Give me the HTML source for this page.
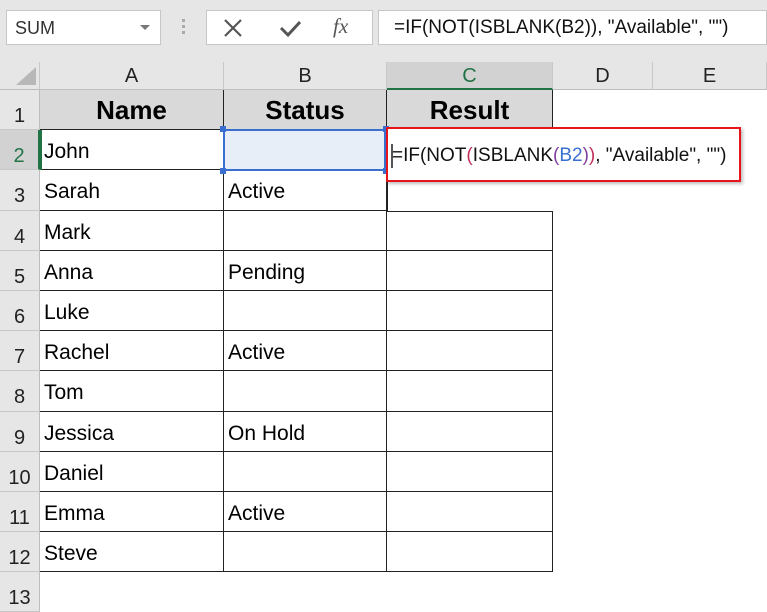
<!DOCTYPE html>
<html><head><style>
*{margin:0;padding:0;box-sizing:border-box}
body{width:767px;height:610px;overflow:hidden;background:#fff;font-family:"Liberation Sans",Arial,sans-serif;position:relative}
.a{position:absolute}
.tb{left:0;top:0;width:767px;height:62px;background:#e6e6e6}
.box{background:#fff;border:1px solid #c6c6c6}
.ch{top:62px;height:28px;background:#e6e6e6;border-right:1px solid #c8c8c8;border-bottom:1px solid #bdbdbd;text-align:center;font-size:20px;line-height:28px;color:#222}
.rh{left:0;width:40px;background:#e6e6e6;border-bottom:1px solid #c8c8c8;border-right:1px solid #bdbdbd;text-align:center;font-size:20px;color:#222;padding-top:15px}
.c{border-right:1.5px solid #222;border-bottom:1.5px solid #222;font-size:21px;color:#000;padding-left:4px;line-height:44px}
.h{background:#d9d9d9;font-weight:bold;font-size:26px;text-align:center;padding:0;line-height:41px}
</style></head><body>
<div class="a tb"></div>
<div class="a box" style="left:6px;top:10px;width:155px;height:35px;font-size:18px;line-height:34px;padding-left:8px;color:#333">SUM</div>
<div class="a" style="left:140px;top:25px;width:0;height:0;border-left:5px solid transparent;border-right:5px solid transparent;border-top:5px solid #777"></div>
<div class="a" style="left:182px;top:19px;width:3px;height:3px;background:#aaa;box-shadow:0 6px #aaa,0 12px #aaa"></div>
<div class="a box" style="left:206px;top:10px;width:167px;height:35px"></div>
<svg class="a" style="left:222px;top:17px" width="24" height="22"><path d="M3 3L19 19M19 3L3 19" stroke="#555" stroke-width="2.2"/></svg>
<svg class="a" style="left:278px;top:17px" width="26" height="22"><path d="M3 11L10 18L22 5" stroke="#555" stroke-width="3" fill="none"/></svg>
<div class="a" style="left:333px;top:14px;font-family:'Liberation Serif',serif;font-style:italic;font-size:21px;color:#555">fx</div>
<div class="a box" style="left:378px;top:10px;width:389px;height:35px;font-size:19px;line-height:34px;padding-left:15px;color:#111">=IF(NOT(ISBLANK(B2)), "Available", "")</div>
<div class="a" style="left:0;top:62px;width:40px;height:28px;background:#e6e6e6;border-right:1px solid #c8c8c8;border-bottom:1px solid #bdbdbd"></div>
<div class="a" style="left:16px;top:67px;width:0;height:0;border-left:20px solid transparent;border-bottom:18px solid #b8b8b8"></div>
<div class="a ch" style="left:40px;width:184px">A</div>
<div class="a ch" style="left:224px;width:163px">B</div>
<div class="a ch" style="left:387px;width:166px;background:#d2d2d2;color:#217346;border-bottom:2px solid #217346">C</div>
<div class="a ch" style="left:553px;width:100px">D</div>
<div class="a ch" style="left:653px;width:114px">E</div>
<div class="a rh" style="top:90px;height:40px">1</div>
<div class="a rh" style="top:130px;height:40px;background:#d2d2d2;color:#217346;border-right:2px solid #217346">2</div>
<div class="a rh" style="top:170px;height:41px">3</div>
<div class="a rh" style="top:211px;height:40px">4</div>
<div class="a rh" style="top:251px;height:40px">5</div>
<div class="a rh" style="top:291px;height:40px">6</div>
<div class="a rh" style="top:331px;height:40px">7</div>
<div class="a rh" style="top:371px;height:41px">8</div>
<div class="a rh" style="top:412px;height:40px">9</div>
<div class="a rh" style="top:452px;height:40px">10</div>
<div class="a rh" style="top:492px;height:40px">11</div>
<div class="a rh" style="top:532px;height:40px">12</div>
<div class="a rh" style="top:572px;height:40px">13</div>

<div class="a c h" style="left:40px;top:90px;width:184px;height:40px">Name</div>
<div class="a c h" style="left:224px;top:90px;width:163px;height:40px">Status</div>
<div class="a c h" style="left:387px;top:90px;width:166px;height:40px">Result</div>

<div class="a c" style="left:40px;top:130px;width:184px;height:40px">John</div>
<div class="a c" style="left:224px;top:130px;width:163px;height:40px"></div>
<div class="a c" style="left:40px;top:170px;width:184px;height:41px">Sarah</div>
<div class="a c" style="left:224px;top:170px;width:163px;height:41px">Active</div>
<div class="a c" style="left:40px;top:211px;width:184px;height:40px">Mark</div>
<div class="a c" style="left:224px;top:211px;width:163px;height:40px"></div>
<div class="a c" style="left:387px;top:211px;width:166px;height:40px;border-top:1.5px solid #222"></div>
<div class="a c" style="left:40px;top:251px;width:184px;height:40px">Anna</div>
<div class="a c" style="left:224px;top:251px;width:163px;height:40px">Pending</div>
<div class="a c" style="left:387px;top:251px;width:166px;height:40px"></div>
<div class="a c" style="left:40px;top:291px;width:184px;height:40px">Luke</div>
<div class="a c" style="left:224px;top:291px;width:163px;height:40px"></div>
<div class="a c" style="left:387px;top:291px;width:166px;height:40px"></div>
<div class="a c" style="left:40px;top:331px;width:184px;height:40px">Rachel</div>
<div class="a c" style="left:224px;top:331px;width:163px;height:40px">Active</div>
<div class="a c" style="left:387px;top:331px;width:166px;height:40px"></div>
<div class="a c" style="left:40px;top:371px;width:184px;height:41px">Tom</div>
<div class="a c" style="left:224px;top:371px;width:163px;height:41px"></div>
<div class="a c" style="left:387px;top:371px;width:166px;height:41px"></div>
<div class="a c" style="left:40px;top:412px;width:184px;height:40px">Jessica</div>
<div class="a c" style="left:224px;top:412px;width:163px;height:40px">On Hold</div>
<div class="a c" style="left:387px;top:412px;width:166px;height:40px"></div>
<div class="a c" style="left:40px;top:452px;width:184px;height:40px">Daniel</div>
<div class="a c" style="left:224px;top:452px;width:163px;height:40px"></div>
<div class="a c" style="left:387px;top:452px;width:166px;height:40px"></div>
<div class="a c" style="left:40px;top:492px;width:184px;height:40px">Emma</div>
<div class="a c" style="left:224px;top:492px;width:163px;height:40px">Active</div>
<div class="a c" style="left:387px;top:492px;width:166px;height:40px"></div>
<div class="a c" style="left:40px;top:532px;width:184px;height:40px">Steve</div>
<div class="a c" style="left:224px;top:532px;width:163px;height:40px"></div>
<div class="a c" style="left:387px;top:532px;width:166px;height:40px"></div>
<div class="a" style="left:40px;top:130px;width:2px;height:40px;background:#217346"></div>

<div class="a" style="left:223px;top:129px;width:163px;height:42px;background:#e8eef8;border:2px solid #3a6fcf"></div>
<div class="a" style="left:220px;top:126px;width:6px;height:6px;background:#3a6fcf"></div>
<div class="a" style="left:383px;top:126px;width:6px;height:6px;background:#3a6fcf"></div>
<div class="a" style="left:220px;top:168px;width:6px;height:6px;background:#3a6fcf"></div>
<div class="a" style="left:383px;top:168px;width:6px;height:6px;background:#3a6fcf"></div>

<div class="a" style="left:386px;top:127px;width:355px;height:55px;background:#fff;border:2px solid #e8141c;box-shadow:2px 2px 3px rgba(0,0,0,.25)"></div>
<div class="a" style="left:386px;top:182px;width:1.5px;height:30px;background:#222"></div>
<div class="a" style="left:391px;top:144px;width:2px;height:24px;background:#555"></div>
<div class="a" style="left:392px;top:145px;font-size:19px;color:#111;white-space:nowrap">=IF(NOT<span style="color:#c0305a">(</span>ISBLANK<span style="color:#8040a0">(</span><span style="color:#3a6fcf">B2</span><span style="color:#8040a0">)</span><span style="color:#c0305a">)</span>, "Available", "")</div>
</body></html>
